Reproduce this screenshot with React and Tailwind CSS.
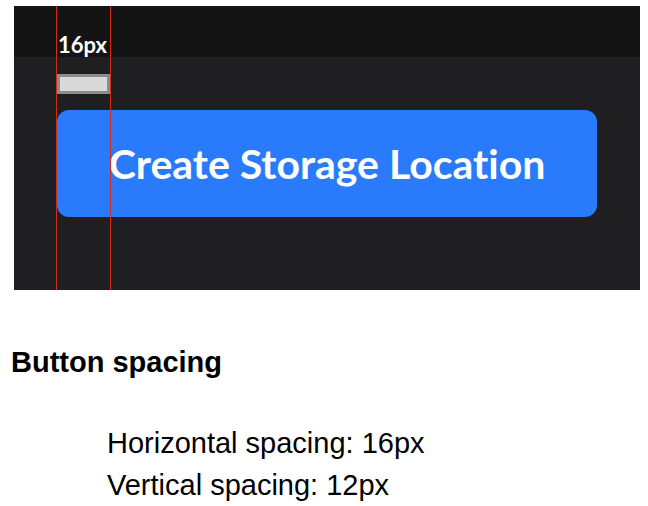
import React from "react";

const App = () => {
  return (
    <div className="min-h-screen bg-white" style={{ fontFamily: '"Liberation Sans", Arial, sans-serif' }}>
      {/* Mockup panel */}
      <div className="pt-[6px] pl-[14px]">
        <div className="relative w-[626px] h-[284px] bg-[#1f1f21] overflow-hidden" style={{ fontFamily: 'Lato, sans-serif' }}>
          <div className="h-[51px] bg-[#141414]" />
          <div className="pl-[43px] pt-[53px]">
            <button className="w-[540px] h-[107px] rounded-[12px] bg-[#2a7afc] text-white text-[41px] font-bold [font-variant-ligatures:none] flex items-center justify-center">
              Create Storage Location
            </button>
          </div>

          {/* Measurement annotation */}
          <div className="absolute top-0 bottom-0 left-[42px] w-px bg-[#d42a1c]" />
          <div className="absolute top-0 bottom-0 left-[96px] w-px bg-[#d42a1c]" />
          <div className="absolute left-[44px] top-[28px] text-[22px] font-bold leading-none text-white">16px</div>
          <div className="absolute left-[43px] top-[68px] w-[53px] h-[20px] bg-[#d9d9d9] border-[3px] border-[#8c8c8c]" />
        </div>
      </div>

      {/* Notes */}
      <div className="pl-[11px] pt-[58px] text-black">
        <h2 className="text-[29px] font-bold leading-none">Button spacing</h2>
        <div className="pl-[96px] pt-[45px] text-[29px] leading-[42px]">
          <p>Horizontal spacing: 16px</p>
          <p>Vertical spacing: 12px</p>
        </div>
      </div>
    </div>
  );
};

export default App;
